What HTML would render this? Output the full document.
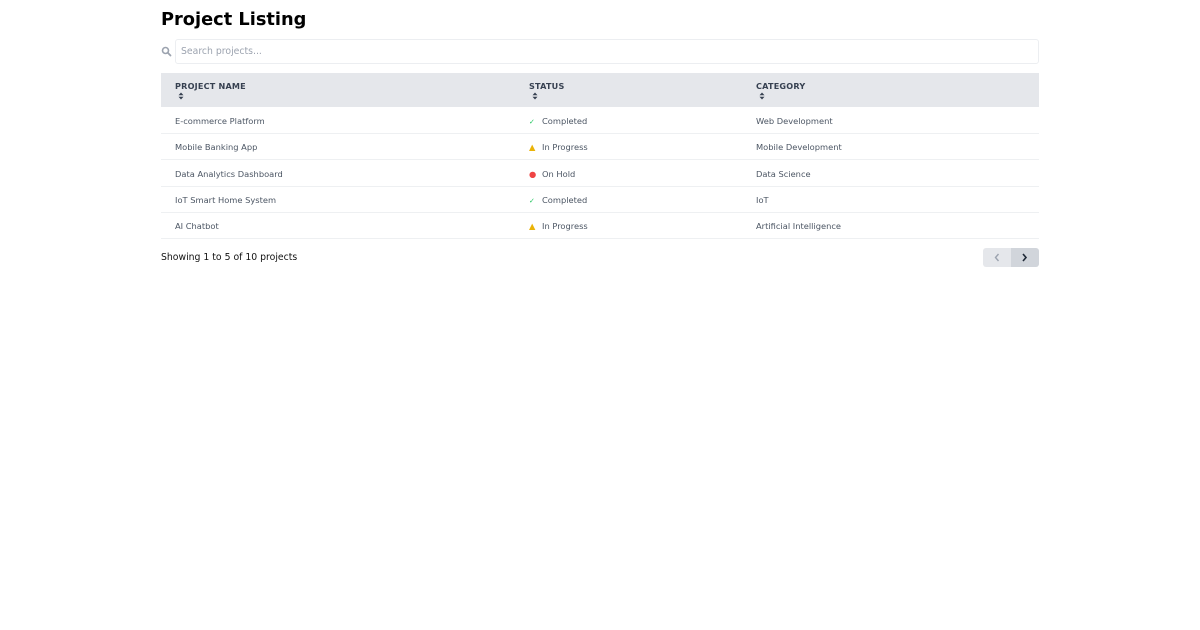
<!DOCTYPE html>
<html><head><style>
body{margin:0;background:#fff;font-family:"DejaVu Sans","Liberation Sans",sans-serif;}
h1{position:absolute;left:161px;top:9px;margin:0;font-size:17.8px;font-weight:bold;color:#000;}
.srch{position:absolute;left:175px;top:39px;width:862px;height:23px;border:1px solid #eceef1;border-radius:3px;font-size:9.3px;color:#9ca3af;line-height:24px;box-sizing:content-box;}
.srch span{margin-left:5px}
.hd{position:absolute;left:161px;top:73px;width:878px;height:34px;background:#e5e7eb;font-size:8.1px;font-weight:bold;color:#374151;}
.hd div{position:absolute;top:8px;letter-spacing:.2px;line-height:10px}
.hd svg{margin-left:3px;margin-top:1px}
.row{position:absolute;left:161px;width:878px;height:26px;border-bottom:1px solid #eef0f2;font-size:8.3px;color:#4b5563;}
.row div{position:absolute;top:9px}
.a{left:14px}.b{left:368px}.d{left:595px}
.ic{display:inline-block;width:10px;margin-right:3px}
</style></head><body>
<h1>Project Listing</h1>
<svg style="position:absolute;left:161px;top:46px" width="11" height="11" viewBox="0 0 11 11"><circle cx="4.5" cy="4.5" r="3" fill="none" stroke="#9ca3af" stroke-width="1.6"/><path d="M6.8 6.8L9.5 9.5" stroke="#9ca3af" stroke-width="1.8" stroke-linecap="round"/></svg>
<div class="srch"><span>Search projects...</span></div>
<div class="hd">
<div style="left:14px">PROJECT NAME<br><svg width="6" height="8"><path d="M0.5 3.3L3 0.5 5.5 3.3zM0.5 4.7L3 7.5 5.5 4.7z" fill="#374151"/></svg></div>
<div style="left:368px">STATUS<br><svg width="6" height="8"><path d="M0.5 3.3L3 0.5 5.5 3.3zM0.5 4.7L3 7.5 5.5 4.7z" fill="#374151"/></svg></div>
<div style="left:595px">CATEGORY<br><svg width="6" height="8"><path d="M0.5 3.3L3 0.5 5.5 3.3zM0.5 4.7L3 7.5 5.5 4.7z" fill="#374151"/></svg></div>
</div>
<div class="row" style="top:107px"><div class="a">E-commerce Platform</div><div class="b"><span class="ic" style="color:#22c55e;font-size:7px">✓</span>Completed</div><div class="d">Web Development</div></div>
<div class="row" style="top:133px"><div class="a">Mobile Banking App</div><div class="b"><span class="ic" style="color:#eab308">▲</span>In Progress</div><div class="d">Mobile Development</div></div>
<div class="row" style="top:160px"><div class="a">Data Analytics Dashboard</div><div class="b"><span class="ic" style="color:#ef4444">●</span>On Hold</div><div class="d">Data Science</div></div>
<div class="row" style="top:186px"><div class="a">IoT Smart Home System</div><div class="b"><span class="ic" style="color:#22c55e;font-size:7px">✓</span>Completed</div><div class="d">IoT</div></div>
<div class="row" style="top:212px"><div class="a">AI Chatbot</div><div class="b"><span class="ic" style="color:#eab308">▲</span>In Progress</div><div class="d">Artificial Intelligence</div></div>
<div style="position:absolute;left:161px;top:252px;font-size:9.3px;color:#111">Showing 1 to 5 of 10 projects</div>
<div style="position:absolute;left:983px;top:248px;width:28px;height:19px;background:#e5e7eb;border-radius:3px 0 0 3px"><svg width="28" height="19"><path d="M15.5 6l-3 3.5 3 3.5" fill="none" stroke="#9ca3af" stroke-width="1.4"/></svg></div>
<div style="position:absolute;left:1011px;top:248px;width:28px;height:19px;background:#d1d5db;border-radius:0 3px 3px 0"><svg width="28" height="19"><path d="M12 6l3 3.5-3 3.5" fill="none" stroke="#1f2937" stroke-width="1.6"/></svg></div>
</body></html>
